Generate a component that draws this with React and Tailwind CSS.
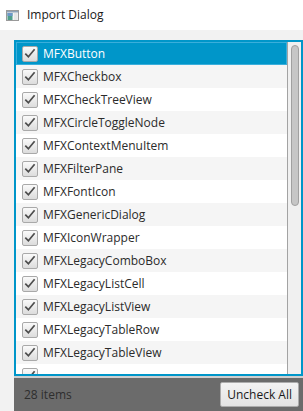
import React from "react";

const items = [
  "MFXButton",
  "MFXCheckbox",
  "MFXCheckTreeView",
  "MFXCircleToggleNode",
  "MFXContextMenuItem",
  "MFXFilterPane",
  "MFXFontIcon",
  "MFXGenericDialog",
  "MFXIconWrapper",
  "MFXLegacyComboBox",
  "MFXLegacyListCell",
  "MFXLegacyListView",
  "MFXLegacyTableRow",
  "MFXLegacyTableView",
  "",
];

function CheckBox() {
  return (
    <div className="w-[16px] h-[16px] shrink-0 rounded-[2px] border border-[#a9a9a9] bg-gradient-to-b from-[#fafafa] to-[#dcdcdc] flex items-center justify-center">
      <svg width="12" height="11" viewBox="0 0 12 11">
        <path d="M1.3 5.6 L4.4 8.8 L10.6 1.3" fill="none" stroke="#4d4d4d" strokeWidth="1.7" />
      </svg>
    </div>
  );
}

function AppIcon() {
  return (
    <svg width="13" height="11" viewBox="0 0 13 11">
      <rect x="0.5" y="0.5" width="12" height="10" fill="#f4f4f4" stroke="#9a9a9a" />
      <rect x="1" y="1" width="11" height="1.5" fill="#8fa3b8" />
      <rect x="1.5" y="3" width="5" height="7" fill="#4f9e8c" />
      <rect x="1.5" y="3" width="5" height="3" fill="#6d97c9" />
      <rect x="8" y="3" width="3.5" height="7" fill="#e6e6e6" />
    </svg>
  );
}

export default function App() {
  return (
    <div
      className="w-[303px] h-[411px] flex flex-col bg-[#f2f2f2] overflow-hidden"
      style={{ fontFamily: '"Open Sans", "Noto Sans", sans-serif' }}
    >
      {/* title bar */}
      <div className="h-[30px] bg-white flex items-center pl-[6px] gap-[8px] shrink-0">
        <AppIcon />
        <span className="text-[12px] text-[#1a1a1a]">Import Dialog</span>
      </div>

      <div className="flex-1 flex flex-col pl-[14px] pt-[10px] min-h-0">
        {/* list */}
        <div className="h-[336px] border-2 border-[#0096c9] flex bg-white overflow-hidden">
          <div className="flex-1 flex flex-col overflow-hidden">
            {items.map((name, i) => {
              const selected = i === 0;
              return (
                <div
                  key={i}
                  className={
                    "h-[23px] shrink-0 flex items-center gap-[5px] " +
                    (selected
                      ? "bg-[#0096c9] border border-[#3aaedb] text-white pl-[5px]"
                      : i % 2 === 1
                      ? "bg-[#f5f5f5] text-[#2b2b2b] pl-[6px]"
                      : "bg-white text-[#2b2b2b] pl-[6px]")
                  }
                >
                  <CheckBox />
                  {name && <span className="text-[12px] leading-none">{name}</span>}
                </div>
              );
            })}
          </div>
          {/* scrollbar */}
          <div className="w-[14px] shrink-0 bg-[#f0f0f0] border-l border-[#a3a3a3] pt-[3px] flex justify-center">
            <div className="w-[8px] h-[161px] rounded-full bg-[#c6c6c6] border border-[#a0a0a0]" />
          </div>
        </div>

        {/* bottom bar */}
        <div className="flex-1 border-t-2 border-[#cfcfcf] bg-[#6b6b6b] flex items-center justify-between pl-[10px] pr-[4px]">
          <span className="text-[12px] text-[#2e2e2e]">28 items</span>
          <button className="h-[25px] px-[6px] rounded-[2px] border border-[#acacac] bg-gradient-to-b from-[#f3f3f3] to-[#e3e3e3] text-[12px] text-[#1a1a1a]">
            Uncheck All
          </button>
        </div>
      </div>
    </div>
  );
}
